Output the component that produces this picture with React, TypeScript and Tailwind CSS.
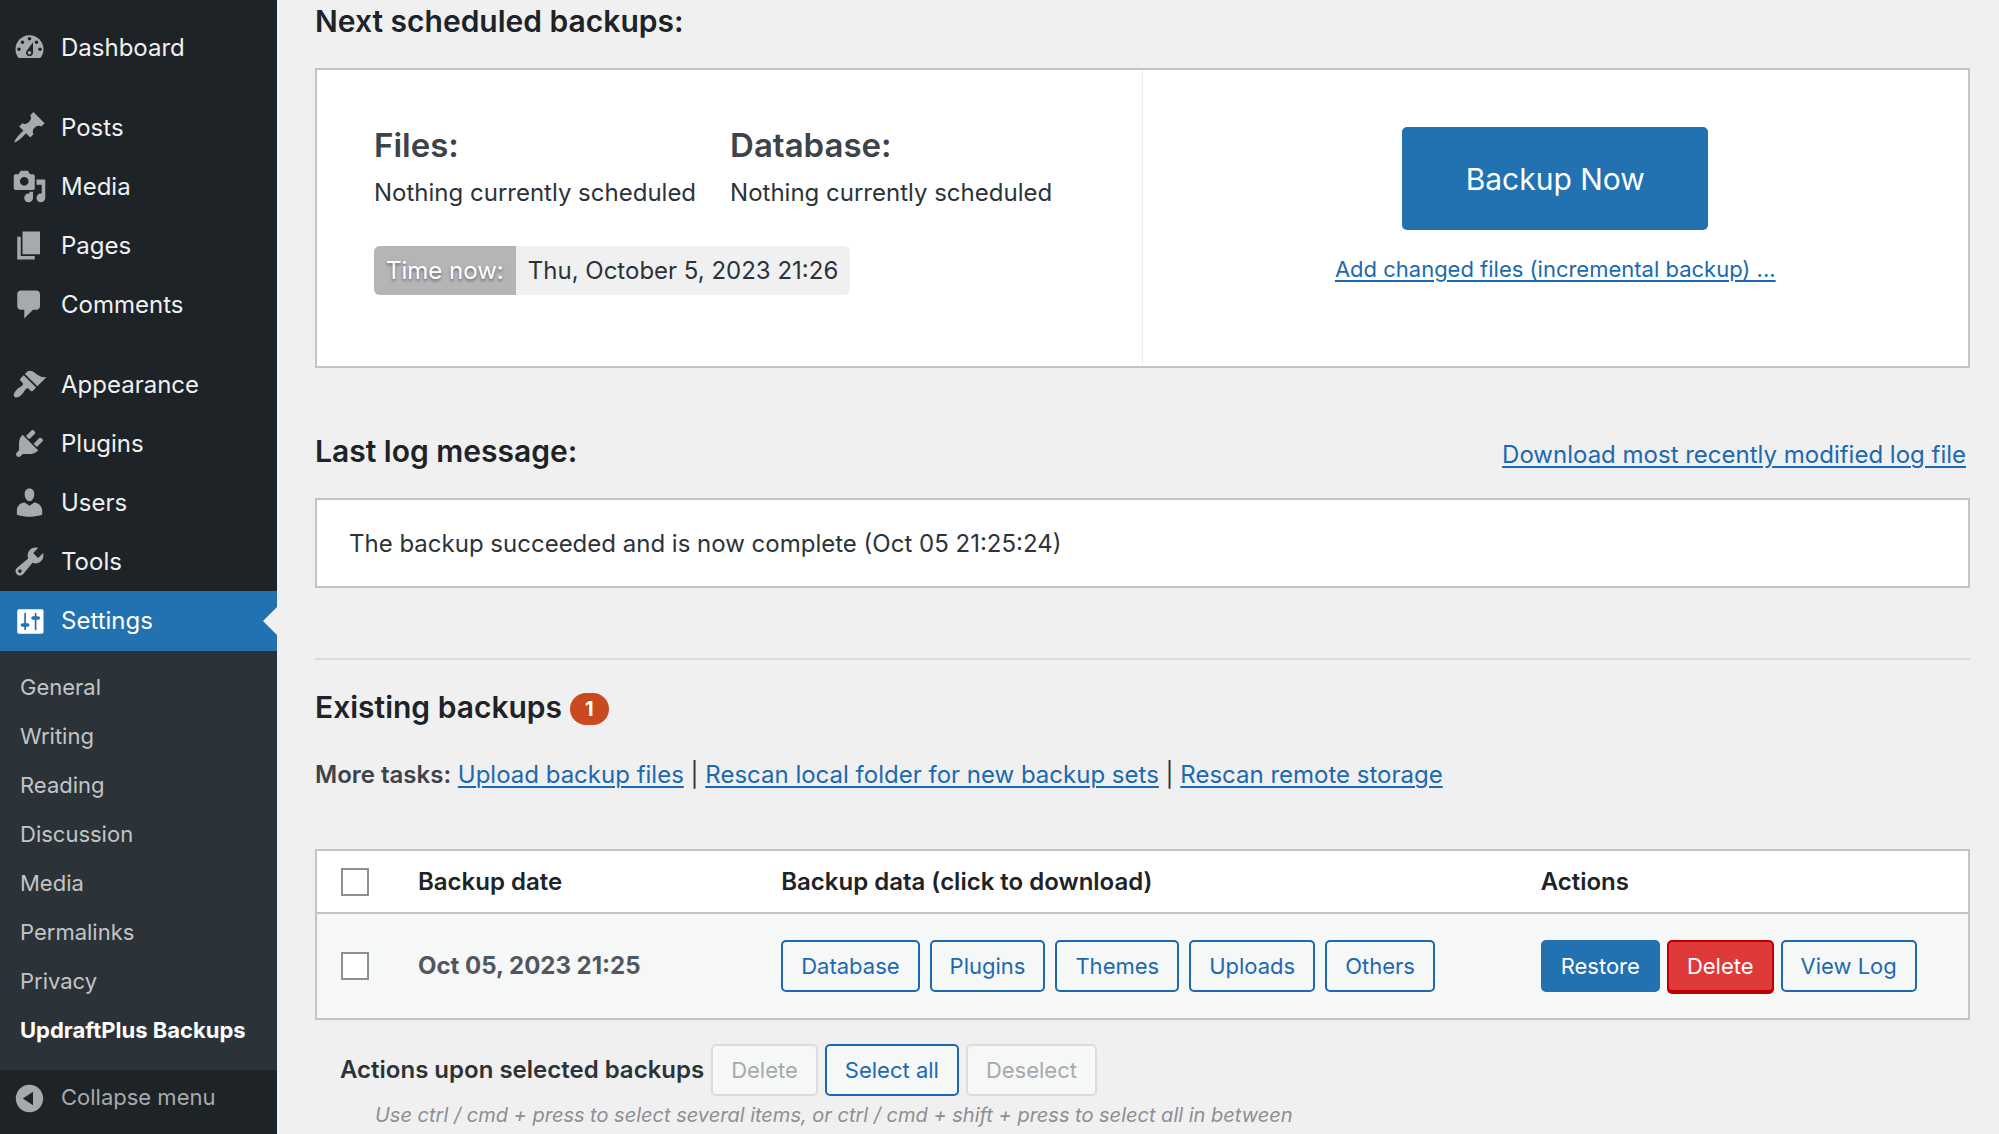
import type { ReactNode } from 'react';

const icons = {
  dashboard: 'M3.76 16h12.48c1.1-1.37 1.76-3.11 1.76-5 0-4.42-3.58-8-8-8s-8 3.58-8 8c0 1.89.66 3.63 1.76 5zM10 4c.55 0 1 .45 1 1s-.45 1-1 1-1-.45-1-1 .45-1 1-1zM6 6c.55 0 1 .45 1 1s-.45 1-1 1-1-.45-1-1 .45-1 1-1zm8 0c.55 0 1 .45 1 1s-.45 1-1 1-1-.45-1-1 .45-1 1-1zm-5.37 5.55L12 7v6c0 1.1-.9 2-2 2s-2-.9-2-2c0-.57.24-1.08.63-1.45zM4 10c.55 0 1 .45 1 1s-.45 1-1 1-1-.45-1-1 .45-1 1-1zm12 0c.55 0 1 .45 1 1s-.45 1-1 1-1-.45-1-1 .45-1 1-1zm-5 3c0-.55-.45-1-1-1s-1 .45-1 1 .45 1 1 1 1-.45 1-1z',
  post: 'M10.44 3.02l1.82-1.82 6.36 6.35-1.83 1.82c-1.05-.68-2.48-.57-3.41.36l-.75.75c-.92.93-1.04 2.35-.35 3.41l-1.83 1.82-2.41-2.41-2.8 2.79c-.42.42-3.38 2.71-3.8 2.29s1.86-3.39 2.28-3.81l2.79-2.79L4.1 9.36l1.83-1.82c1.05.69 2.48.57 3.4-.36l.75-.75c.93-.92 1.05-2.35.36-3.41z',
  media: 'M13 11V4c0-.55-.45-1-1-1h-1.67L9 1H5L3.67 3H2c-.55 0-1 .45-1 1v7c0 .55.45 1 1 1h10c.55 0 1-.45 1-1zM7 4.5c1.38 0 2.5 1.12 2.5 2.5S8.38 9.5 7 9.5 4.5 8.38 4.5 7 5.62 4.5 7 4.5zM14 6h5v10.5c0 1.38-1.12 2.5-2.5 2.5S14 17.88 14 16.5s1.12-2.5 2.5-2.5c.17 0 .34.02.5.05V9h-3V6zm-4 8.05V13h2v3.5c0 1.38-1.12 2.5-2.5 2.5S7 17.88 7 16.5 8.12 14 9.5 14c.17 0 .34.02.5.05z',
  page: 'M6 15V2h10v13H6zm-1 1h8v2H3V5h2v11z',
  comments: 'M5 2h9c1.1 0 2 .9 2 2v7c0 1.1-.9 2-2 2h-2l-5 5v-5H5c-1.1 0-2-.9-2-2V4c0-1.1.9-2 2-2z',
  appearance: 'M14.48 11.06L7.41 3.99l1.5-1.5c.5-.56 2.3-.47 3.51.32 1.21.8 1.43 1.28 2.91 2.1 1.18.64 2.45 1.26 4.45.85zm-.71.71L6.7 4.7 4.93 6.47c-.39.39-.39 1.02 0 1.41l1.06 1.06c.39.39.39 1.03 0 1.42-.6.6-1.43 1.11-2.21 1.69-.35.26-.7.53-1.01.84C1.43 14.23.4 16.08 1.4 17.07c.99 1 2.84-.03 4.18-1.36.31-.31.58-.66.85-1.02.57-.78 1.08-1.61 1.69-2.21.39-.39 1.02-.39 1.41 0l1.06 1.06c.39.39 1.02.39 1.41 0z',
  plugins: 'M13.11 4.36L9.87 7.6 8 5.73l3.24-3.24c.35-.34 1.05-.2 1.56.32.52.51.66 1.21.31 1.55zm-8 1.77l.91-1.12 9.01 9.01-1.19.84c-.71.71-2.63 1.16-3.82 1.16H6.14L4.9 17.26c-.59.59-1.54.59-2.12 0-.59-.58-.59-1.53 0-2.12l1.24-1.24v-3.88c0-1.13.4-3.19 1.09-3.89zm7.26 3.97l3.24-3.24c.34-.35 1.04-.21 1.55.31.52.51.66 1.21.31 1.55l-3.24 3.25z',
  users: 'M10 9.25c-2.27 0-2.73-3.44-2.73-3.44C7 4.02 7.82 2 9.97 2c2.16 0 2.98 2.02 2.71 3.81 0 0-.41 3.44-2.68 3.44zm0 2.57L12.72 10c2.39 0 4.52 2.33 4.52 4.53v2.49s-3.65 1.13-7.24 1.13c-3.65 0-7.24-1.13-7.24-1.13v-2.49c0-2.25 1.94-4.48 4.47-4.48z',
  tools: 'M16.68 9.77c-1.34 1.34-3.3 1.67-4.95.99l-5.41 6.52c-.99.99-2.59.99-3.58 0s-.99-2.59 0-3.57l6.52-5.42c-.68-1.65-.35-3.61.99-4.95 1.28-1.28 3.12-1.62 4.72-1.06l-2.89 2.89 2.82 2.82 2.86-2.87c.53 1.58.18 3.39-1.08 4.65zM3.81 16.21c.4.39 1.04.39 1.43 0 .4-.4.4-1.04 0-1.43-.39-.4-1.03-.4-1.43 0-.39.39-.39 1.03 0 1.43z',
  settings: 'M18 16V4c0-.55-.45-1-1-1H4c-.55 0-1 .45-1 1v12c0 .55.45 1 1 1h13c.55 0 1-.45 1-1zM8 11h1c.55 0 1 .45 1 1s-.45 1-1 1H8v1.5c0 .28-.22.5-.5.5s-.5-.22-.5-.5V13H6c-.55 0-1-.45-1-1s.45-1 1-1h1V5.5c0-.28.22-.5.5-.5s.5.22.5.5V11zm5-2h-1c-.55 0-1-.45-1-1s.45-1 1-1h1V5.5c0-.28.22-.5.5-.5s.5.22.5.5V7h1c.55 0 1 .45 1 1s-.45 1-1 1h-1v5.5c0 .28-.22.5-.5.5s-.5-.22-.5-.5V9z',
  collapse: 'M10 2.16c4.33 0 7.84 3.51 7.84 7.84s-3.51 7.84-7.84 7.84S2.16 14.33 2.16 10 5.67 2.16 10 2.16zm2 11.72V6.12L6.18 9.97z',
};

type IconName = keyof typeof icons;

const menuGroups: { label: string; icon: IconName }[][] = [
  [{ label: 'Dashboard', icon: 'dashboard' }],
  [
    { label: 'Posts', icon: 'post' },
    { label: 'Media', icon: 'media' },
    { label: 'Pages', icon: 'page' },
    { label: 'Comments', icon: 'comments' },
  ],
  [
    { label: 'Appearance', icon: 'appearance' },
    { label: 'Plugins', icon: 'plugins' },
    { label: 'Users', icon: 'users' },
    { label: 'Tools', icon: 'tools' },
  ],
];

const settingsItems = ['General', 'Writing', 'Reading', 'Discussion', 'Media', 'Permalinks', 'Privacy', 'UpdraftPlus Backups'];
const entities = ['Database', 'Plugins', 'Themes', 'Uploads', 'Others'];

function Icon({ name, className }: { name: IconName; className: string }) {
  return (
    <svg viewBox="0 0 20 20" className={`w-[35px] h-[35px] shrink-0 ${className}`} fill="currentColor" fillRule="evenodd" aria-hidden="true">
      <path d={icons[name]} />
    </svg>
  );
}

const buttonStyles = {
  outline: 'border-[#1b69b0] bg-[#f6f7f7] text-[#1b69b0]',
  primary: 'border-[#2271b1] bg-[#2271b1] text-white',
  danger: 'border-[#c00000] bg-[#df3a3a] text-white shadow-[0_2px_0_#c00000]',
  disabled: 'border-[#dcdcde] bg-[#f6f7f7] text-[#a7aaad]',
};

function Button({ variant = 'outline', children }: { variant?: keyof typeof buttonStyles; children: ReactNode }) {
  return (
    <button type="button" disabled={variant === 'disabled'}
      className={`h-[52px] px-[18px] rounded-[5px] border-2 text-[22px] whitespace-nowrap ${buttonStyles[variant]}`}>
      {children}
    </button>
  );
}

function TextLink({ children }: { children: ReactNode }) {
  return <a href="#" className="text-[#1b69b0] underline underline-offset-3 decoration-2">{children}</a>;
}

function Checkbox({ label }: { label: string }) {
  return <input type="checkbox" aria-label={label} className="block appearance-none w-7 h-7 ml-6 border-2 border-[#8c8f94] bg-white" />;
}

function Sidebar() {
  return (
    <nav className="w-[277px] shrink-0 bg-[#1d2327] pt-[18px] text-2xl text-[#f0f0f1]">
      {menuGroups.map((group, i) => (
        <ul key={i} className="mb-[21px] last-of-type:mb-0">
          {group.map(({ label, icon }) => (
            <li key={label}>
              <a href="#" className="flex items-center gap-3.5 h-[59px] pl-3">
                <Icon name={icon} className="text-[#a7aaad]" />
                {label}
              </a>
            </li>
          ))}
        </ul>
      ))}
      <a href="#" className="relative flex items-center gap-3.5 h-[60px] pl-3 -mt-[21px] bg-[#2271b1] text-white">
        <Icon name="settings" className="text-white" />
        Settings
        <span className="absolute right-0 top-4 border-y-[14px] border-y-transparent border-r-[14px] border-r-[#f0f0f1]" />
      </a>
      <ul className="bg-[#2c3338] pt-3 pb-[15px] text-[22px] text-[#c3c4c7]">
        {settingsItems.map((item) => (
          <li key={item}>
            <a href="#" className={item === 'UpdraftPlus Backups' ? 'flex items-center h-[49px] pl-5 font-bold text-white' : 'flex items-center h-[49px] pl-5'}>{item}</a>
          </li>
        ))}
      </ul>
      <button type="button" className="flex items-center gap-3.5 w-full h-14 pl-3 text-[22px] text-[#a7aaad]">
        <Icon name="collapse" className="text-[#a7aaad]" />
        Collapse menu
      </button>
    </nav>
  );
}

export default function App() {
  return (
    <div className="flex min-h-screen bg-[#f0f0f1] font-['Inter',sans-serif] text-[#2c3338]">
      <Sidebar />
      <main className="flex-1 min-w-0 pl-[38px] pr-[29px] pt-1 text-2xl leading-[30px]">
        <h2 className="mb-[30px] text-3xl leading-[34px] font-semibold text-[#1d2327]">Next scheduled backups:</h2>
        <section className="grid grid-cols-2 h-[300px] border-2 border-[#c3c4c7] bg-white">
          <div className="pl-[57px] pt-14 border-r border-[#eeeeee]">
            <div className="flex gap-[34px]">
              <div>
                <h3 className="mb-3.5 text-[33px] leading-[38px] font-semibold text-[#3c434a]">Files:</h3>
                <p>Nothing currently scheduled</p>
              </div>
              <div>
                <h3 className="mb-3.5 text-[33px] leading-[38px] font-semibold text-[#3c434a]">Database:</h3>
                <p>Nothing currently scheduled</p>
              </div>
            </div>
            <div className="inline-flex mt-[38px] h-[49px] items-stretch rounded-md overflow-hidden bg-[#f0f0f1] leading-[49px]">
              <span className="px-3 bg-[#b5b5b5] text-white [text-shadow:0_2px_3px_#667]">Time now:</span>
              <span className="px-3">Thu, October 5, 2023 21:26</span>
            </div>
          </div>
          <div className="flex flex-col items-center pt-[57px] text-[22px]">
            <button type="button" className="w-[306px] h-[103px] mb-6 rounded-[5px] bg-[#2271b1] text-3xl text-white">Backup Now</button>
            <TextLink>Add changed files (incremental backup) ...</TextLink>
          </div>
        </section>

        <div className="flex items-end justify-between h-9 mt-[66px] mb-7 pr-1">
          <h2 className="h-9 text-3xl leading-[34px] font-semibold text-[#1d2327]">Last log message:</h2>
          <TextLink>Download most recently modified log file</TextLink>
        </div>
        <section className="flex items-center h-[90px] pl-8 pt-0.5 border-2 border-[#c3c4c7] bg-white">
          The backup succeeded and is now complete (Oct 05 21:25:24)
        </section>

        <hr className="mt-[70px] mb-[30px] border-t-2 border-[#dcdcde]" />

        <h2 className="flex items-center gap-2 h-[34px] text-3xl leading-[34px] font-semibold text-[#1d2327]">
          Existing backups
          <span className="px-[15px] h-8 mt-1 rounded-full bg-[#ca4a1f] text-[20px] leading-8 font-bold text-white">1</span>
        </h2>
        <p className="mt-9">
          <strong className="font-semibold text-[#3c434a]">More tasks:</strong> <TextLink>Upload backup files</TextLink> | <TextLink>Rescan local folder for new backup sets</TextLink> | <TextLink>Rescan remote storage</TextLink>
        </p>

        <table className="w-full mt-[59px] table-fixed border-separate border-spacing-0 border-2 border-[#c3c4c7] bg-white text-left">
          <thead>
            <tr className="h-[63px] text-[#1d2327]">
              <th className="w-[101px] p-0 border-b-2 border-[#c3c4c7]"><Checkbox label="Select all backups" /></th>
              <th className="w-[22%] p-0 border-b-2 border-[#c3c4c7] font-semibold">Backup date</th>
              <th className="w-[46%] p-0 border-b-2 border-[#c3c4c7] font-semibold">Backup data (click to download)</th>
              <th className="p-0 border-b-2 border-[#c3c4c7] font-semibold">Actions</th>
            </tr>
          </thead>
          <tbody>
            <tr className="h-[104px] bg-[#f6f7f7]">
              <td className="p-0"><Checkbox label="Select backup Oct 05, 2023 21:25" /></td>
              <td className="p-0 font-bold text-[#50575e]">Oct 05, 2023 21:25</td>
              <td className="p-0">
                <div className="flex gap-2.5">
                  {entities.map((e) => <Button key={e}>{e}</Button>)}
                </div>
              </td>
              <td className="p-0">
                <div className="flex gap-[7px]">
                  <Button variant="primary">Restore</Button>
                  <Button variant="danger">Delete</Button>
                  <Button>View Log</Button>
                </div>
              </td>
            </tr>
          </tbody>
        </table>

        <div className="flex items-center gap-[7px] mt-6 pl-[25px]">
          <strong className="font-semibold">Actions upon selected backups</strong>
          <Button variant="disabled">Delete</Button>
          <Button>Select all</Button>
          <Button variant="disabled">Deselect</Button>
        </div>
        <p className="mt-1 pl-[60px] text-[20px] italic text-[#8c8f94]">
          Use ctrl / cmd + press to select several items, or ctrl / cmd + shift + press to select all in between
        </p>
      </main>
    </div>
  );
}
